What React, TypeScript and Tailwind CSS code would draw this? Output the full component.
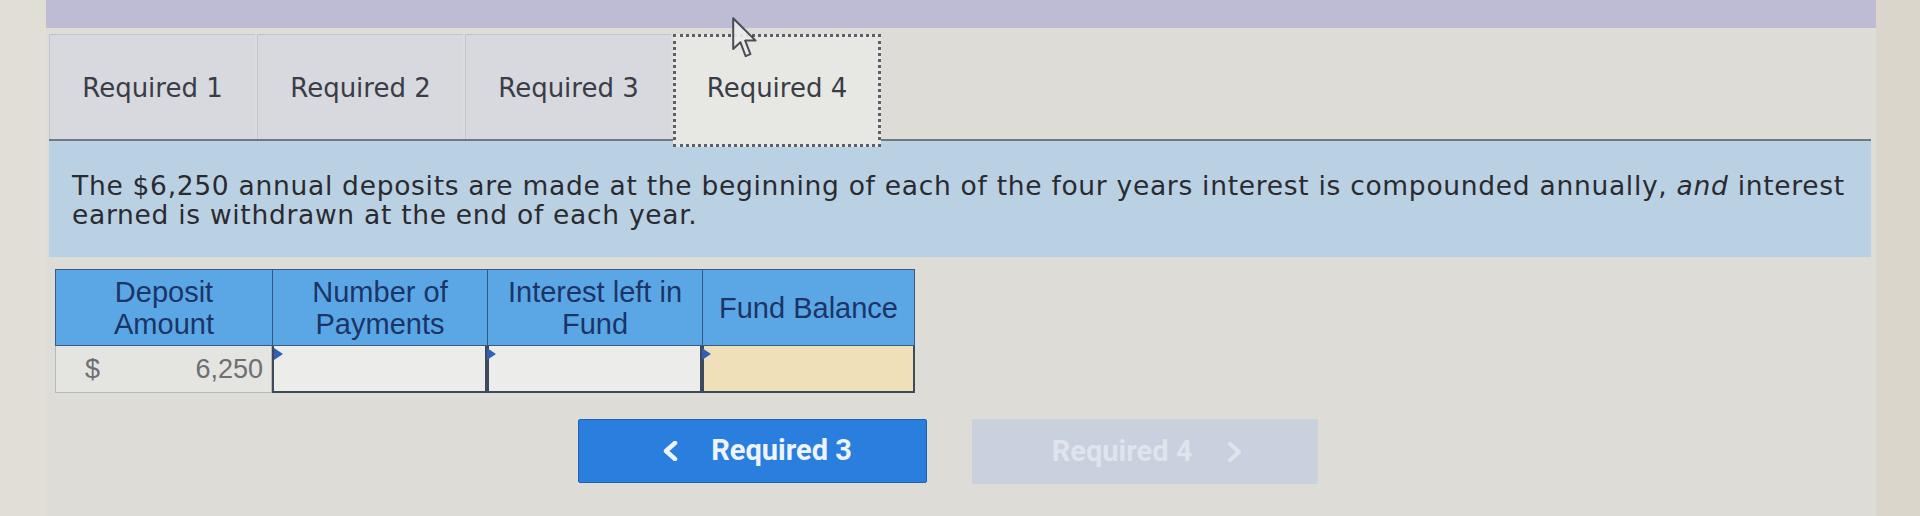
import React from "react";

const dv = { fontFamily: '"DejaVu Sans", Verdana, sans-serif' };
const ar = { fontFamily: '"Liberation Sans", Arial, sans-serif' };
const rb = { fontFamily: 'Roboto, "Liberation Sans", sans-serif' };

function Tab({ label, active }: { label: string; active?: boolean }) {
  if (active) {
    return (
      <div className="relative z-10 -mb-[8px] flex h-[113px] w-[208px] items-center justify-center border-[3px] border-dotted border-[#5b5f6a] bg-[#e7e7e4] pb-[4px] text-[26px] text-[#3a3d47]">
        {label}
      </div>
    );
  }
  return (
    <div className="flex h-[105px] w-[206px] items-center justify-center border-t border-l border-[#c3c5ca] bg-[#d7d9de] pt-[2px] text-[26px] text-[#3a3d47]">
      {label}
    </div>
  );
}

function Marker() {
  return (
    <svg className="absolute left-0 top-[2px]" width="9" height="12" viewBox="0 0 9 12">
      <polygon points="0,0 9,6 0,12" fill="#2f5fb8" />
    </svg>
  );
}

function Cursor() {
  return (
    <svg
      className="absolute left-[732px] top-[17px] z-20 opacity-90"
      width="26"
      height="42"
      viewBox="0 0 13 21"
    >
      <path
        d="M0.6 0.6 L0.6 16 L4.2 12.6 L6.8 19.6 L9.2 18.6 L6.6 11.8 L11.8 11.8 Z"
        fill="#ececea"
        stroke="#3b3e47"
        strokeWidth="1"
        strokeLinejoin="round"
      />
    </svg>
  );
}

export default function App() {
  return (
    <div className="relative flex h-[516px] w-[1920px] overflow-hidden bg-[#dcd9d1]" style={dv}>
      <div className="w-[46px] shrink-0 bg-[#e1ded6]" />
      <div className="flex w-[1830px] shrink-0 flex-col bg-[#dddcd6]">
        <div className="h-[28px] bg-[#bebcd4]" />

        <div className="mt-[6px] ml-[3px] mr-[5px] flex flex-col">
          <div className="flex items-start gap-[2px] border-b-2 border-[#6f7985]">
            <Tab label="Required 1" />
            <Tab label="Required 2" />
            <Tab label="Required 3" />
            <Tab label="Required 4" active />
          </div>

          <div className="bg-[#bad1e3] px-[23px] pt-[30px] pb-[28px] text-[26.5px] leading-[29px] tracking-[0.7px] text-[#2a2b30]">
            The $6,250 annual deposits are made at the beginning of each of the four years interest
            is compounded annually, <i>and</i> interest earned is withdrawn at the end of each year.
          </div>
        </div>

        <div className="mt-[12px] ml-[9px] flex flex-col" style={ar}>
          <div className="flex h-[77px] w-[860px] border border-[#3b5a82] bg-[#5ba7e6] text-[29px] leading-[32px] text-[#1c3466]">
            <div className="flex w-[216px] items-center justify-center text-center">
              Deposit
              <br />
              Amount
            </div>
            <div className="flex w-[215px] items-center justify-center border-l border-[#36577f] text-center">
              Number of
              <br />
              Payments
            </div>
            <div className="flex w-[215px] items-center justify-center border-l border-[#36577f] text-center">
              Interest left in
              <br />
              Fund
            </div>
            <div className="flex flex-1 items-center justify-center border-l border-[#36577f] text-center">
              Fund Balance
            </div>
          </div>
          <div className="flex h-[47px] w-[860px]">
            <div className="flex w-[217px] items-center justify-between border border-t-0 border-[#b9bab8] bg-[#e4e4e1] pl-[29px] pr-[8px] text-[27px] text-[#6e6f72]">
              <span>$</span>
              <span>6,250</span>
            </div>
            <div className="relative w-[215px] border-2 border-t-0 border-[#3c4a5c] bg-[#ecedeb]">
              <Marker />
            </div>
            <div className="relative w-[215px] border-2 border-t-0 border-l-0 border-[#3c4a5c] bg-[#ecedeb]">
              <div className="absolute left-0 top-0 h-full w-[2px] bg-[#3c4a5c]" />
              <Marker />
            </div>
            <div className="relative flex-1 border-2 border-t-0 border-l-0 border-[#3c4a5c] bg-[#f0e0b9]">
              <div className="absolute left-0 top-0 h-full w-[2px] bg-[#3c4a5c]" />
              <Marker />
            </div>
          </div>
        </div>

        <div className="mt-[26px] ml-[532px] flex gap-[45px]" style={rb}>
          <div className="flex h-[64px] w-[349px] items-center justify-center gap-[32px] rounded-[2px] border border-[#1d62b5] bg-[#2a7edd] pl-[8px] text-[29px] font-bold text-[#eef4fc]">
            <svg width="18" height="20" viewBox="0 0 18 20">
              <polyline
                points="14,2 5,10 14,18"
                fill="none"
                stroke="#eef4fc"
                strokeWidth="4.5"
                strokeLinecap="round"
                strokeLinejoin="round"
              />
            </svg>
            <span>Required 3</span>
          </div>
          <div className="flex h-[65px] w-[346px] items-center justify-center gap-[34px] rounded-[2px] bg-[#c9d0de] pl-[6px] text-[29px] font-bold text-[#dfe4ed]">
            <span>Required 4</span>
            <svg width="18" height="20" viewBox="0 0 18 20">
              <polyline
                points="4,2 13,10 4,18"
                fill="none"
                stroke="#dfe4ed"
                strokeWidth="4"
                strokeLinecap="round"
                strokeLinejoin="round"
              />
            </svg>
          </div>
        </div>
      </div>
      <div className="flex-1 bg-[#dad6cc]" />
      <Cursor />
    </div>
  );
}
